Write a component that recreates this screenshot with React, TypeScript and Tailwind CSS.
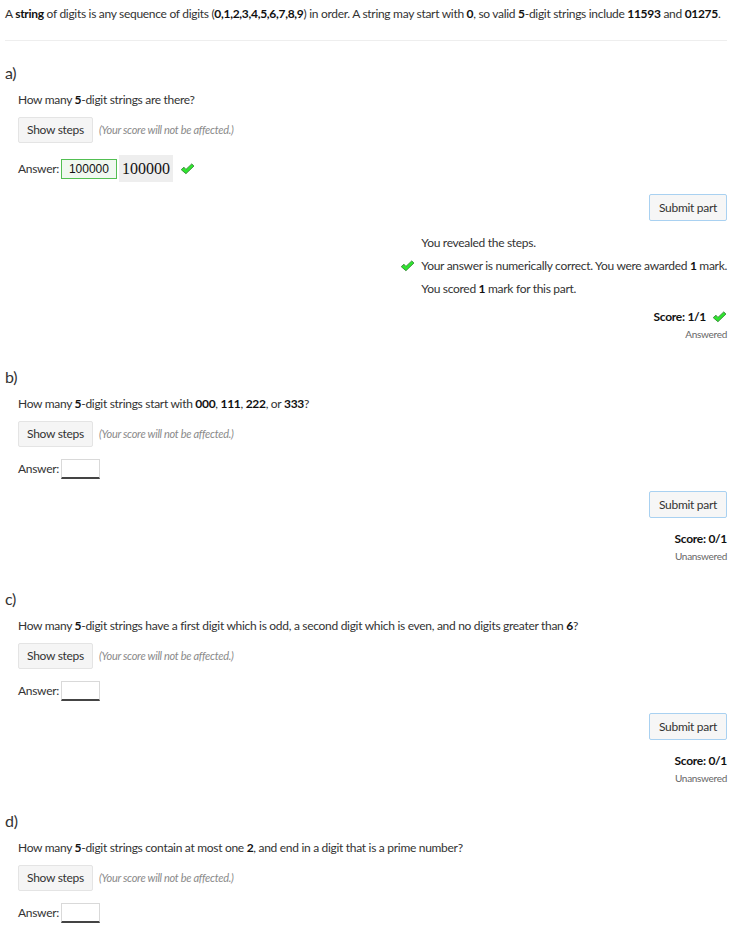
import React from 'react'

const font = { fontFamily: '"Lato", "Noto Sans", sans-serif', letterSpacing: '-0.3px' }

function Tick({ className = '' }: { className?: string }) {
    return (
        <svg viewBox="0 0 16 13" className={className}>
            <path
                d="M1.2 7.2 L4.2 4.6 L6.3 7 L12.6 1 L15 3.3 L6.3 11.6 Z"
                fill="#2ee62e"
                stroke="#3b8a3b"
                strokeWidth="1"
                strokeLinejoin="round"
            />
        </svg>
    )
}

function ShowSteps() {
    return (
        <div className="mt-[8px] flex items-center">
            <button className="h-[26px] w-[75px] rounded-[2px] border border-[#e4e4e4] bg-[#f5f5f5] text-[12px] text-[#333]">
                Show steps
            </button>
            <span className="ml-[6px] text-[11px] italic text-[#8a8a8a]">(Your score will not be affected.)</span>
        </div>
    )
}

function SubmitRow() {
    return (
        <div className="mt-[12px] flex justify-end">
            <button className="h-[27px] w-[78px] rounded-[2px] border border-[#a9d1f1] bg-[#f6f6f6] text-[12px] text-[#333]">
                Submit part
            </button>
        </div>
    )
}

function ScoreBlock({ score, status, tick }: { score: string; status: string; tick?: boolean }) {
    return (
        <div className="flex flex-col items-end">
            <div className="flex h-[18px] items-center text-[12px] font-bold text-[#111]">
                Score: {score}
                {tick && <Tick className="ml-[6px] h-[12px] w-[15px]" />}
            </div>
            <div className="mt-[1px] text-[10px] leading-[14px] text-[#666]">{status}</div>
        </div>
    )
}

function AnswerBox() {
    return (
        <div className="mt-[12px] flex items-center text-[12px] text-[#333]">
            Answer:
            <div className="ml-[2px] h-[20px] w-[39px] border border-b-2 border-[#d9d9d9] border-b-[#444] bg-white"></div>
        </div>
    )
}

function EmptyPart({ label, question }: { label: string; question: React.ReactNode }) {
    return (
        <section className="mt-[26px]">
            <div className="text-[16px] leading-[20px] text-[#333]">{label}</div>
            <div className="pl-[13px]">
                <p className="mt-[8px] text-[12px] leading-[18px] text-[#333]">{question}</p>
                <ShowSteps />
                <AnswerBox />
                <SubmitRow />
                <div className="mt-[12px]">
                    <ScoreBlock score="0/1" status="Unanswered" />
                </div>
            </div>
        </section>
    )
}

export default function App() {
    return (
        <div className="min-h-screen bg-white pl-[5px] pr-[6px] pt-[5px]" style={font}>
            <p className="text-[12px] leading-[18px] text-[#333]">
                A <b className="text-[#111]">string</b> of digits is any sequence of digits (<b className="text-[#111]">0,1,2,3,4,5,6,7,8,9</b>) in order. A string may start with <b className="text-[#111]">0</b>, so valid <b className="text-[#111]">5</b>-digit strings include <b className="text-[#111]">11593</b> and <b className="text-[#111]">01275</b>.
            </p>
            <hr className="mt-[17px] border-t border-[#eeeeee]" />

            <section className="mt-[22px]">
                <div className="text-[16px] leading-[20px] text-[#333]">a)</div>
                <div className="pl-[13px]">
                    <p className="mt-[8px] text-[12px] leading-[18px] text-[#333]">
                        How many <b className="text-[#111]">5</b>-digit strings are there?
                    </p>
                    <ShowSteps />
                    <div className="mt-[12px] flex h-[27px] items-center text-[12px] text-[#333]">
                        Answer:
                        <div
                            className="ml-[2px] flex h-[20px] w-[56px] items-center justify-center border border-[#52bf52] bg-[#f0f8f0] text-[12px] tracking-normal text-[#111]"
                            style={{ fontFamily: '"Liberation Sans", Arial, sans-serif' }}
                        >
                            100000
                        </div>
                        <div
                            className="ml-[2px] flex h-[27px] items-center bg-[#eeeeee] px-[3px] text-[16px] tracking-normal text-[#111]"
                            style={{ fontFamily: '"Liberation Serif", "Times New Roman", serif' }}
                        >
                            100000
                        </div>
                        <Tick className="ml-[7px] h-[12px] w-[15px]" />
                    </div>
                    <SubmitRow />
                    <div className="mt-[10px] flex justify-end">
                        <div className="text-[12px] leading-[23px] text-[#333]">
                            <div className="pl-[21px]">You revealed the steps.</div>
                            <div className="flex items-center">
                                <Tick className="mr-[6px] h-[12px] w-[15px]" />
                                <span>Your answer is numerically correct. You were awarded <b className="text-[#111]">1</b> mark.</span>
                            </div>
                            <div className="pl-[21px]">You scored <b className="text-[#111]">1</b> mark for this part.</div>
                        </div>
                    </div>
                    <div className="mt-[8px]">
                        <ScoreBlock score="1/1" status="Answered" tick />
                    </div>
                </div>
            </section>

            <EmptyPart
                label="b)"
                question={
                    <>
                        How many <b className="text-[#111]">5</b>-digit strings start with <b className="text-[#111]">000</b>, <b className="text-[#111]">111</b>, <b className="text-[#111]">222</b>, or <b className="text-[#111]">333</b>?
                    </>
                }
            />
            <EmptyPart
                label="c)"
                question={
                    <>
                        How many <b className="text-[#111]">5</b>-digit strings have a first digit which is odd, a second digit which is even, and no digits greater than <b className="text-[#111]">6</b>?
                    </>
                }
            />
            <section className="mt-[26px] pb-[20px]">
                <div className="text-[16px] leading-[20px] text-[#333]">d)</div>
                <div className="pl-[13px]">
                    <p className="mt-[8px] text-[12px] leading-[18px] text-[#333]">
                        How many <b className="text-[#111]">5</b>-digit strings contain at most one <b className="text-[#111]">2</b>, and end in a digit that is a prime number?
                    </p>
                    <ShowSteps />
                    <AnswerBox />
                </div>
            </section>
        </div>
    )
}
